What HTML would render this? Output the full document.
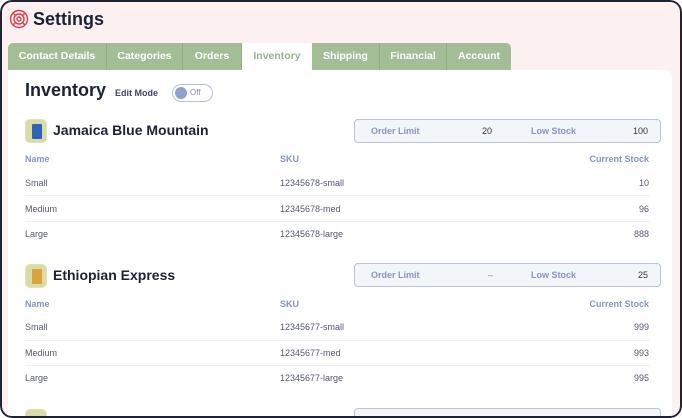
<!DOCTYPE html>
<html><head><meta charset="utf-8"><style>
*{box-sizing:border-box;margin:0;padding:0}
body{width:682px;height:418px;overflow:hidden;background:#fff;font-family:"Liberation Sans",sans-serif;position:relative}
.frame{position:absolute;left:0;top:0;width:682px;height:418px;border-radius:12px;background:#fdf0f0;overflow:hidden}
.bd{position:absolute;left:0;top:0;width:682px;height:418px;border:2px solid #1f2433;border-radius:12px;z-index:10}
.a{position:absolute;white-space:nowrap}
.title{left:33px;top:9px;font-size:18px;font-weight:bold;color:#1c2236}
.tabs{left:8px;top:43px;height:27px;display:flex;background:#a3bd96;border-radius:5px 5px 0 0;overflow:hidden}
.tab{height:27px;line-height:27px;font-size:10.5px;font-weight:bold;color:#fff;text-align:center;border-right:1px solid #93ae86}
.tab.act{background:#fff;color:#96b389;border-right:none}
.panel{left:8px;top:70px;width:664px;height:360px;background:#fff;border-radius:0 6px 0 0}
.h1{left:25px;top:80px;font-size:18px;font-weight:bold;color:#1c2236}
.em{left:115px;top:88px;font-size:9px;font-weight:bold;color:#3d4566}
.tog{left:172px;top:84px;width:41px;height:18px;border:1px solid #b5c0d6;border-radius:9px}
.knob{left:2px;top:2px;width:12px;height:12px;border-radius:50%;background:#8fa2c8}
.off{left:17px;top:3px;font-size:8px;color:#7f8db0}
.thumb{width:22px;height:24px;border-radius:5px;background:#d9dba8;border:1px solid #e4e2b0}
.pname{font-size:14px;color:#1c2236;font-weight:bold}
.box{width:307px;height:24px;border:1px solid #b8c4d8;border-radius:4px;background:#f2f5f9;font-size:9px}
.lbl{color:#8597bd;font-weight:bold}
.hd{font-size:9px;font-weight:bold;color:#8597bd}
.cell{font-size:9px;color:#555a6c}
.sep{left:25px;width:625px;height:1px;background:#eef0f4}
</style></head><body>
<div class="frame">
<svg class="a" style="left:9px;top:9px" width="20" height="20" viewBox="0 0 20 20" fill="none" stroke="#e23b4e" stroke-width="1.4"><circle cx="10" cy="10" r="8.5"/><circle cx="10" cy="10" r="5"/><circle cx="10" cy="10" r="2"/><path d="M4 4l2 2M16 4l-2 2M4 16l2-2M16 16l-2-2"/></svg>
<div class="a title">Settings</div>
<div class="a tabs">
<div class="tab" style="width:99px">Contact Details</div><div class="tab" style="width:76px">Categories</div><div class="tab" style="width:59px">Orders</div><div class="tab act" style="width:70px">Inventory</div><div class="tab" style="width:68px">Shipping</div><div class="tab" style="width:67px">Financial</div><div class="tab" style="width:64px;border:none">Account</div>
</div>
<div class="a panel"></div>
<div class="a h1">Inventory</div>
<div class="a em">Edit Mode</div>
<div class="a tog"><div class="a knob"></div><div class="a off">Off</div></div>

<div class="a thumb" style="left:25px;top:119px"><div class="a" style="left:6px;top:4px;width:10px;height:15px;background:#2f62b8;border-radius:1px"></div></div>
<div class="a pname" style="left:53px;top:122px">Jamaica Blue Mountain</div>
<div class="a box" style="left:354px;top:119px">
<span class="a lbl" style="left:16px;top:6px">Order Limit</span><span class="a" style="left:127px;top:6px;color:#333">20</span>
<span class="a lbl" style="left:176px;top:6px">Low Stock</span><span class="a" style="right:12px;top:6px;color:#333">100</span></div>
<div class="a hd" style="left:25px;top:154px">Name</div><div class="a hd" style="left:280px;top:154px">SKU</div><div class="a hd" style="right:33px;top:154px">Current Stock</div>
<div class="a cell" style="left:25px;top:178px">Small</div><div class="a cell" style="left:280px;top:178px">12345678-small</div><div class="a cell" style="right:33px;top:178px">10</div>
<div class="a sep" style="top:195px"></div>
<div class="a cell" style="left:25px;top:204px">Medium</div><div class="a cell" style="left:280px;top:204px">12345678-med</div><div class="a cell" style="right:33px;top:204px">96</div>
<div class="a sep" style="top:221px"></div>
<div class="a cell" style="left:25px;top:229px">Large</div><div class="a cell" style="left:280px;top:229px">12345678-large</div><div class="a cell" style="right:33px;top:229px">888</div>

<div class="a thumb" style="left:25px;top:264px"><div class="a" style="left:6px;top:4px;width:10px;height:15px;background:#d9a53a;border-radius:1px"></div></div>
<div class="a pname" style="left:53px;top:267px">Ethiopian Express</div>
<div class="a box" style="left:354px;top:263px">
<span class="a lbl" style="left:16px;top:6px">Order Limit</span><span class="a" style="left:133px;top:6px;color:#888">–</span>
<span class="a lbl" style="left:176px;top:6px">Low Stock</span><span class="a" style="right:12px;top:6px;color:#333">25</span></div>
<div class="a hd" style="left:25px;top:299px">Name</div><div class="a hd" style="left:280px;top:299px">SKU</div><div class="a hd" style="right:33px;top:299px">Current Stock</div>
<div class="a cell" style="left:25px;top:322px">Small</div><div class="a cell" style="left:280px;top:322px">12345677-small</div><div class="a cell" style="right:33px;top:322px">999</div>
<div class="a sep" style="top:340px"></div>
<div class="a cell" style="left:25px;top:348px">Medium</div><div class="a cell" style="left:280px;top:348px">12345677-med</div><div class="a cell" style="right:33px;top:348px">993</div>
<div class="a sep" style="top:365px"></div>
<div class="a cell" style="left:25px;top:373px">Large</div><div class="a cell" style="left:280px;top:373px">12345677-large</div><div class="a cell" style="right:33px;top:373px">995</div>

<div class="a thumb" style="left:25px;top:409px"></div>
<div class="a box" style="left:354px;top:408px"></div>
<div class="bd"></div>
</div>
</body></html>
